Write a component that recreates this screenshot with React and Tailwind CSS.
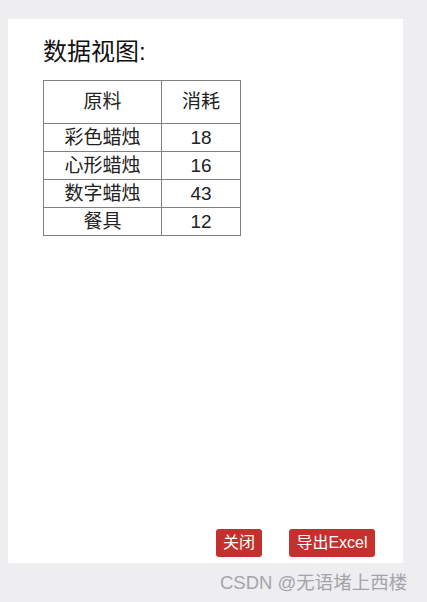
export default function App() {
  const rows = [
    ["彩色蜡烛", "18"],
    ["心形蜡烛", "16"],
    ["数字蜡烛", "43"],
    ["餐具", "12"],
  ];
  const font = { fontFamily: '"Liberation Sans", "Noto Sans CJK SC", sans-serif' };
  return (
    <div className="w-[427px] h-[602px] bg-[#eeedf0] pt-[19px] pl-[8px] relative" style={font}>
      <div className="w-[395px] h-[544px] bg-white flex flex-col pl-[35px] pr-[28px]">
        <div className="mt-[17px] text-[24px] leading-[32px] text-[#111]">数据视图:</div>
        <table className="mt-[12px] border-collapse w-[198px] text-[19px] text-[#222]">
          <thead>
            <tr className="h-[43px]">
              <th className="border border-[#808080] font-normal w-[118px] text-center">原料</th>
              <th className="border border-[#808080] font-normal text-center">消耗</th>
            </tr>
          </thead>
          <tbody>
            {rows.map(([a, b]) => (
              <tr key={a} className="h-[28px]">
                <td className="border border-[#808080] text-center leading-[26px] p-0">{a}</td>
                <td className="border border-[#808080] text-center leading-[26px] p-0">{b}</td>
              </tr>
            ))}
          </tbody>
        </table>
        <div className="mt-auto mb-[6px] flex justify-end gap-[27px]">
          <button className="h-[28px] w-[46px] rounded-[3px] bg-[#c3302d] text-white text-[16px]">关闭</button>
          <button className="h-[28px] w-[86px] rounded-[3px] bg-[#c3302d] text-white text-[16px]">导出Excel</button>
        </div>
      </div>
      <div className="absolute left-[220px] top-[569px] text-[18.5px] text-[#a5a5a8]">CSDN @无语堵上西楼</div>
    </div>
  );
}
